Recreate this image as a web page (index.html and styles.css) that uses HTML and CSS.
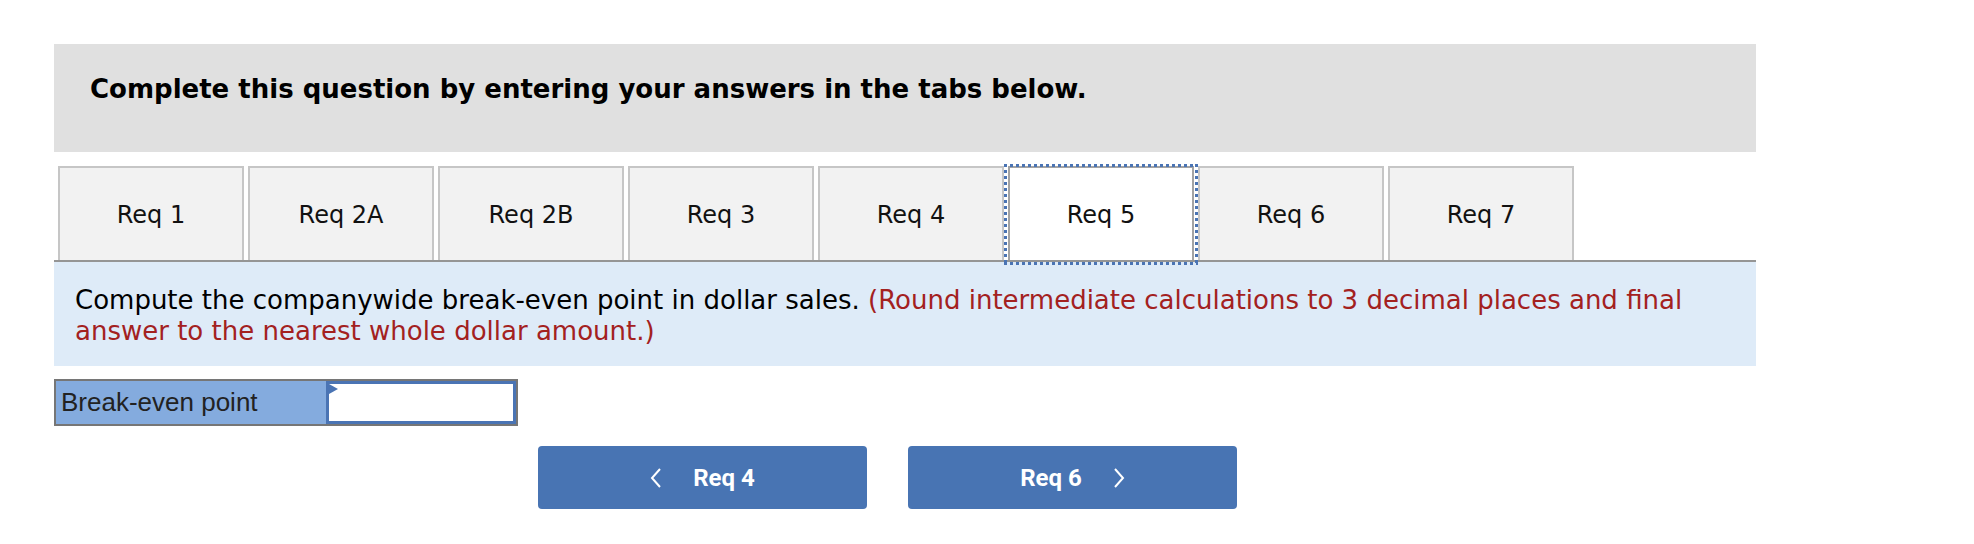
FILE: index.html
```html
<!DOCTYPE html>
<html lang="en">
<head>
<meta charset="utf-8">
<title>Req 5</title>
<link rel="stylesheet" href="styles.css">
</head>
<body>
<div class="page">
  <div class="header">Complete this question by entering your answers in the tabs below.</div>

  <div class="tabs">
    <div class="tab">Req 1</div>
    <div class="tab">Req 2A</div>
    <div class="tab">Req 2B</div>
    <div class="tab">Req 3</div>
    <div class="tab">Req 4</div>
    <div class="tab active">Req 5</div>
    <div class="tab">Req 6</div>
    <div class="tab">Req 7</div>
  </div>

  <div class="question">
    Compute the companywide break-even point in dollar sales. <span class="hint">(Round intermediate calculations to 3 decimal places and final<br>answer to the nearest whole dollar amount.)</span>
  </div>

  <div class="answer-row">
    <div class="answer-label">Break-even point</div>
    <div class="answer-input"><span class="marker"></span></div>
  </div>

  <div class="nav">
    <div class="nav-btn">
      <svg class="chev" width="12" height="22" viewBox="0 0 12 22"><polyline points="10,2 2,11 10,20" fill="none" stroke="#fff" stroke-width="2"/></svg>
      <span>Req 4</span>
    </div>
    <div class="nav-btn">
      <span>Req 6</span>
      <svg class="chev" width="12" height="22" viewBox="0 0 12 22"><polyline points="2,2 10,11 2,20" fill="none" stroke="#fff" stroke-width="2"/></svg>
    </div>
  </div>
</div>
</body>
</html>
```

FILE: styles.css
```css
* { box-sizing: border-box; }

body {
  margin: 0;
  background: #fff;
  font-family: "DejaVu Sans", Verdana, sans-serif;
  color: #000;
}

.page {
  margin: 44px 0 0 54px;
  width: 1702px;
}

.header {
  height: 108px;
  background: #e0e0e0;
  padding: 30px 36px 0;
  font-weight: bold;
  font-size: 26px;
  line-height: 30px;
}

.tabs {
  margin-top: 14px;
  padding-left: 4px;
  display: flex;
  align-items: flex-end;
  gap: 4px;
  border-bottom: 2px solid #959595;
}

.tab {
  position: relative;
  width: 186px;
  height: 94px;
  border: 2px solid #c6c6c6;
  border-bottom: none;
  background: #f2f2f2;
  display: flex;
  align-items: center;
  justify-content: center;
  font-size: 24px;
  color: #111;
  padding-top: 2px;
}

.tab.active {
  background: #fff;
  border-color: #a3a3a3;
}

.tab.active::after {
  content: "";
  position: absolute;
  top: -4px;
  bottom: -5px;
  left: -6px;
  right: -6px;
  background:
    repeating-linear-gradient(90deg, #4a74b4 0 3px, transparent 3px 6px) top left / 100% 3px no-repeat,
    repeating-linear-gradient(90deg, #4a74b4 0 3px, transparent 3px 6px) bottom left / 100% 3px no-repeat,
    repeating-linear-gradient(180deg, #4a74b4 0 3px, transparent 3px 6px) top left / 3px 100% no-repeat,
    repeating-linear-gradient(180deg, #4a74b4 0 3px, transparent 3px 6px) top right / 3px 100% no-repeat;
}

.question {
  background: #deebf8;
  padding: 23px 21px 19px;
  font-size: 26px;
  line-height: 31px;
  color: #000;
}

.hint {
  color: #a3211f;
}

.answer-row {
  margin-top: 13px;
  display: flex;
  width: 464px;
  height: 47px;
  border: 2px solid #767676;
}

.answer-label {
  width: 270px;
  background: #84abde;
  font-family: "Liberation Sans", Arial, sans-serif;
  font-size: 26px;
  color: #222;
  padding-left: 5px;
  display: flex;
  align-items: center;
}

.answer-input {
  position: relative;
  flex: 1;
  background: #fff;
  border: 3px solid #4a74b4;
}

.marker {
  position: absolute;
  top: 0;
  left: 0;
  width: 0;
  height: 0;
  border-top: 5px solid transparent;
  border-bottom: 5px solid transparent;
  border-left: 9px solid #4a74b4;
}

.nav {
  margin-top: 20px;
  padding-left: 484px;
  display: flex;
  gap: 41px;
}

.nav-btn {
  width: 329px;
  height: 63px;
  background: #4874b3;
  border-radius: 4px;
  display: flex;
  align-items: center;
  justify-content: center;
  gap: 31px;
  color: #fff;
  font-family: Roboto, "Liberation Sans", sans-serif;
  font-weight: bold;
  font-size: 24px;
}

.chev {
  display: block;
}
```
